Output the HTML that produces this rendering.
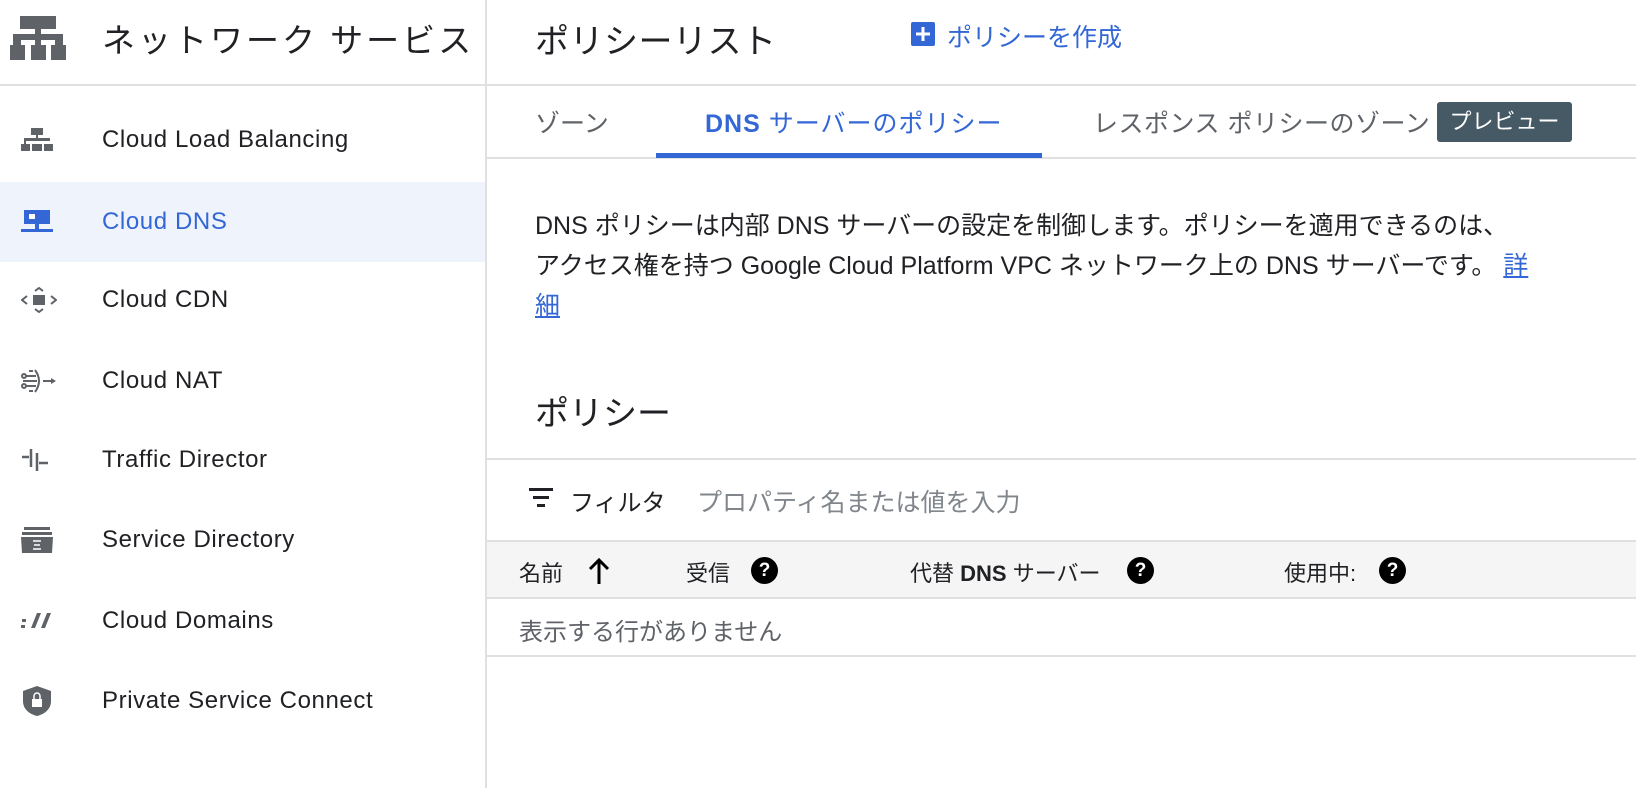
<!DOCTYPE html>
<html><head><meta charset="utf-8"><style>
*{margin:0;padding:0;box-sizing:border-box}
body{width:1636px;height:788px;overflow:hidden;background:#fff;font-family:"Liberation Sans","Noto Sans CJK JP",sans-serif;color:#202124;position:relative}
.a{position:absolute;white-space:nowrap}
.line{position:absolute;background:#e0e0e0;height:2px}
.item{position:absolute;left:0;width:485px;height:80px}
.item .t{position:absolute;left:102px;top:50%;transform:translateY(-50%);font-size:24px;letter-spacing:0.6px}
.item svg{position:absolute;left:21px;top:50%;transform:translateY(-50%)}
.q{display:inline-block;width:27px;height:27px;border-radius:50%;background:#000;color:#fff;font-size:19px;font-weight:bold;text-align:center;line-height:27px;vertical-align:middle}
</style></head><body>
<div class="a" style="left:485px;top:0;width:2px;height:788px;background:#e0e0e0"></div>
<div class="line" style="left:0;top:84px;width:1636px"></div>
<svg class="a" style="left:10px;top:16px" width="56" height="44" viewBox="0 0 56 44"><g fill="#5f6368"><rect x="10" y="0" width="36" height="13"/><rect x="25" y="13" width="6" height="9"/><rect x="3" y="18" width="50" height="6"/><rect x="3" y="24" width="8" height="6"/><rect x="25" y="24" width="6" height="6"/><rect x="45" y="24" width="8" height="6"/><rect x="0" y="29" width="15" height="15"/><rect x="21" y="29" width="15" height="15"/><rect x="41" y="29" width="15" height="15"/></g></svg>
<div class="a" style="left:102px;top:14px;font-size:33px;letter-spacing:3px">ネットワーク サービス</div>

<div class="item" style="top:100px"><svg width="32" height="24" viewBox="0 0 32 24"><g fill="#5f6368"><rect x="10" y="0" width="12" height="7"/><rect x="15" y="7" width="2" height="4"/><rect x="3" y="10" width="26" height="3"/><rect x="3" y="13" width="2" height="3"/><rect x="0" y="16" width="9" height="7"/><rect x="11" y="16" width="10" height="7"/><rect x="23" y="16" width="9" height="7"/></g></svg><div class="t">Cloud Load Balancing</div></div>
<div class="item" style="top:182px;background:#eef3fc"><svg width="32" height="24" viewBox="0 0 32 24"><g fill="#3367d6"><rect x="3" y="0" width="26" height="14"/><rect x="14" y="14" width="4" height="5"/><rect x="0" y="19" width="32" height="3"/></g><rect x="8" y="4" width="6" height="5" fill="#fff"/></svg><div class="t" style="color:#3367d6">Cloud DNS</div></div>
<div class="item" style="top:260px"><svg width="36" height="26" viewBox="0 0 36 26"><g fill="none" stroke="#5f6368" stroke-width="2"><path d="M6 9 L1 13 L6 17"/><path d="M30 9 L35 13 L30 17"/><path d="M14 4 L18 1 L22 4"/><path d="M14 22 L18 25 L22 22"/></g><rect x="12" y="8" width="12" height="10" fill="#5f6368"/></svg><div class="t">Cloud CDN</div></div>
<div class="item" style="top:341px"><svg width="36" height="26" viewBox="0 0 36 26"><g fill="none" stroke="#5f6368" stroke-width="2"><circle cx="3" cy="8" r="2"/><circle cx="3" cy="18" r="2"/><path d="M5 8 H15 M5 18 H15 M2 13 H16 M8 3 H12 M8 23 H12"/><path d="M14 2 Q22 13 14 24"/><path d="M22 13 H32"/></g><path d="M30 10 L35 13 L30 16Z" fill="#5f6368"/></svg><div class="t">Cloud NAT</div></div>
<div class="item" style="top:420px"><svg width="32" height="26" viewBox="0 0 32 26"><g fill="none" stroke="#5f6368" stroke-width="2.5"><path d="M1 10 H8"/><path d="M10 2 V20"/><path d="M16 6 V24"/><path d="M18 16 H27"/></g></svg><div class="t">Traffic Director</div></div>
<div class="item" style="top:500px"><svg width="32" height="26" viewBox="0 0 32 26"><g fill="#5f6368"><rect x="3" y="0" width="26" height="3"/><rect x="1" y="5" width="30" height="3"/><path d="M0 10 H32 L31 26 H1Z"/></g><g stroke="#fff" stroke-width="1.5"><path d="M12 14 H20 M13 18 H19 M12 22 H20"/></g></svg><div class="t">Service Directory</div></div>
<div class="item" style="top:581px"><svg width="32" height="22" viewBox="0 0 32 22"><g fill="#5f6368"><rect x="1" y="9" width="4" height="3"/><rect x="0" y="15" width="4" height="3"/><path d="M10 18 L16 3 H20 L14 18Z"/><path d="M20 18 L26 3 H30 L24 18Z"/></g></svg><div class="t">Cloud Domains</div></div>
<div class="item" style="top:661px"><svg width="32" height="32" viewBox="0 0 32 32"><path d="M16 1 L30 6 V16 C30 24 24 29 16 31 C8 29 2 24 2 16 V6Z" fill="#5f6368"/><rect x="11" y="14" width="10" height="8" fill="#fff"/><path d="M13 14 V11 a3 3 0 0 1 6 0 V14" fill="none" stroke="#fff" stroke-width="1.5"/></svg><div class="t">Private Service Connect</div></div>

<div class="a" style="left:535px;top:14px;font-size:34px;letter-spacing:0.5px">ポリシーリスト</div>
<svg class="a" style="left:911px;top:22px" width="24" height="24" viewBox="0 0 24 24"><rect width="24" height="24" rx="2" fill="#3367d6"/><path d="M12 5 V19 M5 12 H19" stroke="#fff" stroke-width="3"/></svg>
<div class="a" style="left:947px;top:18px;font-size:25px;color:#3367d6">ポリシーを作成</div>

<div class="line" style="left:487px;top:157px;width:1149px"></div>
<div class="a" style="left:535px;top:104px;font-size:25px;color:#5f6368">ゾーン</div>
<div class="a" style="left:705px;top:104px;font-size:25px;color:#3367d6;font-weight:bold;letter-spacing:1px">DNS <span style="font-weight:normal">サーバーのポリシー</span></div>
<div class="a" style="left:656px;top:153px;width:386px;height:5px;background:#3367d6"></div>
<div class="a" style="left:1093px;top:104px;font-size:25px;color:#5f6368;letter-spacing:0.5px">レスポンス ポリシーのゾーン</div>
<div class="a" style="left:1437px;top:102px;width:135px;height:40px;background:#455a64;border-radius:3px;color:#fff;font-size:22px;line-height:40px;text-align:center">プレビュー</div>

<div class="a" style="left:535px;top:206px;font-size:25px;line-height:40px;width:1060px;white-space:normal">DNS ポリシーは内部 DNS サーバーの設定を制御します。ポリシーを適用できるのは、<br>アクセス権を持つ Google Cloud Platform VPC ネットワーク上の DNS サーバーです。 <span style="color:#3367d6;text-decoration:underline">詳<br>細</span></div>

<div class="a" style="left:535px;top:386px;font-size:34px">ポリシー</div>
<div class="line" style="left:487px;top:458px;width:1149px"></div>
<svg class="a" style="left:529px;top:488px" width="24" height="20" viewBox="0 0 24 20"><g fill="#202124"><rect x="0" y="0" width="24" height="3"/><rect x="4" y="8" width="16" height="3"/><rect x="8" y="16" width="8" height="3"/></g></svg>
<div class="a" style="left:570px;top:483px;font-size:24px">フィルタ</div>
<div class="a" style="left:697px;top:483px;font-size:25px;color:#80868b">プロパティ名または値を入力</div>

<div class="a" style="left:487px;top:540px;width:1149px;height:59px;background:#f5f5f5;border-top:2px solid #e0e0e0;border-bottom:2px solid #e0e0e0"></div>
<div class="a" style="left:519px;top:556px;font-size:22px">名前</div>
<svg class="a" style="left:588px;top:557px" width="22" height="28" viewBox="0 0 22 28"><path d="M11 3 V27 M2 12 L11 3 L20 12" fill="none" stroke="#000" stroke-width="3"/></svg>
<div class="a" style="left:686px;top:556px;font-size:22px">受信</div>
<span class="a q" style="left:751px;top:557px">?</span>
<div class="a" style="left:910px;top:556px;font-size:22px">代替 <b>DNS</b> サーバー</div>
<span class="a q" style="left:1127px;top:557px">?</span>
<div class="a" style="left:1284px;top:556px;font-size:22px">使用中:</div>
<span class="a q" style="left:1379px;top:557px">?</span>
<div class="a" style="left:519px;top:612px;font-size:24px;color:#5f6368">表示する行がありません</div>
<div class="line" style="left:487px;top:655px;width:1149px"></div>
</body></html>
